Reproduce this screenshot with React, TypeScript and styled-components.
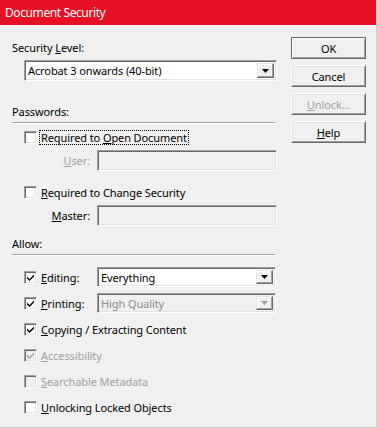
import * as React from 'react';
import styled, { createGlobalStyle } from 'styled-components';

const GlobalStyle = createGlobalStyle`
  html, body {
    margin: 0;
    padding: 0;
    background: #f0f0f0;
  }
  body {
    font-family: "Noto Sans", "Open Sans", sans-serif;
    font-size: 11px;
    letter-spacing: -0.1px;
    color: #000;
  }
`;

const Window = styled.div`
  width: 377px;
  height: 428px;
  box-sizing: border-box;
  background: #f0f0f0;
  border-right: 1px solid #d0d0d0;
  border-bottom: 1px solid #d0d0d0;
  display: flex;
  flex-direction: column;
`;

const TitleBar = styled.div`
  height: 25px;
  background: #e81123;
  color: #fff;
  display: flex;
  align-items: center;
  padding-left: 5px;
  font-size: 12px;
  letter-spacing: -0.4px;
`;

const Body = styled.div`
  display: flex;
  align-items: flex-start;
`;

const MainColumn = styled.div`
  width: 265px;
  padding: 15px 0 0 12px;
  display: flex;
  flex-direction: column;
`;

const ButtonColumn = styled.div`
  margin-left: 14px;
  padding-top: 12px;
  display: flex;
  flex-direction: column;
  gap: 6px;
`;

const Label = styled.div<{ $top?: number }>`
  height: 16px;
  line-height: 16px;
  margin-top: ${p => p.$top ?? 0}px;
  white-space: nowrap;
`;

const Separator = styled.div<{ $top?: number }>`
  margin-top: ${p => p.$top ?? 0}px;
  width: 263px;
  height: 1px;
  background: #a0a0a0;
  border-bottom: 1px solid #fff;
`;

const Indented = styled.div<{ $top?: number }>`
  margin-top: ${p => p.$top ?? 0}px;
  padding-left: 12px;
  display: flex;
  flex-direction: column;
`;

const Row = styled.div<{ $height: number; $top?: number }>`
  height: ${p => p.$height}px;
  margin-top: ${p => p.$top ?? 0}px;
  display: flex;
  align-items: center;
  white-space: nowrap;
`;

const Box = styled.span<{ $disabled?: boolean }>`
  width: 13px;
  height: 13px;
  box-sizing: border-box;
  flex: none;
  background: ${p => (p.$disabled ? '#f0f0f0' : '#fff')};
  border: 1px solid;
  border-color: #a0a0a0 #fff #fff #a0a0a0;
  box-shadow: inset 1px 1px 0 #696969, inset -1px -1px 0 #e3e3e3;
  display: flex;
  align-items: center;
  justify-content: center;
`;

const CheckText = styled.span<{ $disabled?: boolean; $focus?: boolean; $width?: number }>`
  margin-left: 3px;
  padding: 0 1px;
  line-height: 13px;
  color: ${p => (p.$disabled ? '#a0a0a0' : '#000')};
  outline: ${p => (p.$focus ? '1px dotted #000' : 'none')};
  width: ${p => (p.$width ? `${p.$width}px` : 'auto')};
  box-sizing: border-box;
`;

const FieldLabel = styled.span<{ $disabled?: boolean }>`
  width: 66px;
  text-align: right;
  color: ${p => (p.$disabled ? '#a0a0a0' : '#000')};
`;

const TextField = styled.div`
  margin-left: 7px;
  width: 180px;
  height: 21px;
  box-sizing: border-box;
  background: #f0f0f0;
  border: 1px solid;
  border-color: #a0a0a0 #fff #fff #a0a0a0;
  box-shadow: inset 1px 1px 0 #696969, inset -1px -1px 0 #e3e3e3;
`;

const Combo = styled.div<{ $width: number; $height: number; $left?: number; $disabled?: boolean; $top?: number }>`
  width: ${p => p.$width}px;
  height: ${p => p.$height}px;
  margin-left: ${p => p.$left ?? 0}px;
  margin-top: ${p => p.$top ?? 0}px;
  box-sizing: border-box;
  flex: none;
  background: ${p => (p.$disabled ? '#f0f0f0' : '#fff')};
  color: ${p => (p.$disabled ? '#8c8c8c' : '#000')};
  border: 1px solid;
  border-color: #a0a0a0 #fff #fff #a0a0a0;
  box-shadow: inset 1px 1px 0 #696969, inset -1px -1px 0 #e3e3e3;
  display: flex;
  align-items: stretch;
  padding: 2px 2px 2px 3px;
`;

const ComboText = styled.span`
  flex: 1;
  display: flex;
  align-items: center;
  white-space: nowrap;
`;

const ComboButton = styled.span`
  width: 17px;
  box-sizing: border-box;
  background: #f0f0f0;
  border: 1px solid;
  border-color: #e3e3e3 #696969 #696969 #e3e3e3;
  box-shadow: inset -1px -1px 0 #a0a0a0, inset 1px 1px 0 #fff;
  display: flex;
  align-items: center;
  justify-content: center;
`;

const Button = styled.div<{ $default?: boolean; $disabled?: boolean }>`
  width: 75px;
  height: 22px;
  box-sizing: border-box;
  background: #f0f0f0;
  color: ${p => (p.$disabled ? '#a0a0a0' : '#000')};
  border: 1px solid;
  border-color: ${p => (p.$default ? '#696969' : '#fff #696969 #696969 #fff')};
  box-shadow: ${p =>
    p.$default
      ? 'inset 1px 1px 0 #fff, inset -1px -1px 0 #a0a0a0'
      : 'inset 1px 1px 0 #e3e3e3, inset -1px -1px 0 #a0a0a0'};
  display: flex;
  align-items: center;
  justify-content: center;
`;

const Arrow = ({ disabled }: { disabled?: boolean }) => (
  <svg width="7" height="4" viewBox="0 0 7 4">
    <polygon points="0,0 7,0 3.5,4" fill={disabled ? '#a0a0a0' : '#000'} />
  </svg>
);

const Check = ({ disabled }: { disabled?: boolean }) => (
  <svg width="9" height="9" viewBox="0 0 9 9">
    <path d="M1 3.5 L3.5 6 L8 1.5 L8 3.5 L3.5 8 L1 5.5 Z" fill={disabled ? '#a0a0a0' : '#000'} />
  </svg>
);

interface ICheckRowProps {
  checked?: boolean;
  disabled?: boolean;
  focus?: boolean;
  height: number;
  top?: number;
  labelWidth?: number;
  children: React.ReactNode;
  extra?: React.ReactNode;
}

const CheckRow = (props: ICheckRowProps) => (
  <Row $height={props.height} $top={props.top}>
    <Box $disabled={props.disabled}>{props.checked && <Check disabled={props.disabled} />}</Box>
    <CheckText $disabled={props.disabled} $focus={props.focus} $width={props.labelWidth}>
      {props.children}
    </CheckText>
    {props.extra}
  </Row>
);

export default function App() {
  return (
    <>
      <GlobalStyle />
      <Window>
        <TitleBar>Document Security</TitleBar>
        <Body>
          <MainColumn>
            <Label>
              Security <u>L</u>evel:
            </Label>
            <Combo $width={253} $height={21} $left={12} $top={4}>
              <ComboText>Acrobat 3 onwards (40-bit)</ComboText>
              <ComboButton>
                <Arrow />
              </ComboButton>
            </Combo>

            <Label $top={23}>Passwords:</Label>
            <Separator $top={2} />
            <Indented $top={4}>
              <CheckRow height={18} focus>
                Required to <u>O</u>pen Document
              </CheckRow>
              <Row $height={21} $top={4}>
                <FieldLabel $disabled>
                  <u>U</u>ser:
                </FieldLabel>
                <TextField />
              </Row>
              <CheckRow height={18} top={12}>
                <u>R</u>equired to Change Security
              </CheckRow>
              <Row $height={21} $top={4}>
                <FieldLabel>
                  <u>M</u>aster:
                </FieldLabel>
                <TextField />
              </Row>
            </Indented>

            <Label $top={10}>Allow:</Label>
            <Separator $top={2} />
            <Indented $top={8}>
              <CheckRow
                height={26}
                checked
                labelWidth={57}
                extra={
                  <Combo $width={179} $height={20}>
                    <ComboText>Everything</ComboText>
                    <ComboButton>
                      <Arrow />
                    </ComboButton>
                  </Combo>
                }
              >
                <u>E</u>diting:
              </CheckRow>
              <CheckRow
                height={26}
                checked
                labelWidth={57}
                extra={
                  <Combo $width={179} $height={20} $disabled>
                    <ComboText>High Quality</ComboText>
                    <ComboButton>
                      <Arrow disabled />
                    </ComboButton>
                  </Combo>
                }
              >
                <u>P</u>rinting:
              </CheckRow>
              <CheckRow height={26} checked>
                <u>C</u>opying / Extracting Content
              </CheckRow>
              <CheckRow height={26} checked disabled>
                <u>A</u>ccessibility
              </CheckRow>
              <CheckRow height={26} disabled>
                <u>S</u>earchable Metadata
              </CheckRow>
              <CheckRow height={26}>
                <u>U</u>nlocking Locked Objects
              </CheckRow>
            </Indented>
          </MainColumn>
          <ButtonColumn>
            <Button $default>OK</Button>
            <Button>Cancel</Button>
            <Button $disabled>
              <u>U</u>nlock...
            </Button>
            <Button>
              <u>H</u>elp
            </Button>
          </ButtonColumn>
        </Body>
      </Window>
    </>
  );
}
